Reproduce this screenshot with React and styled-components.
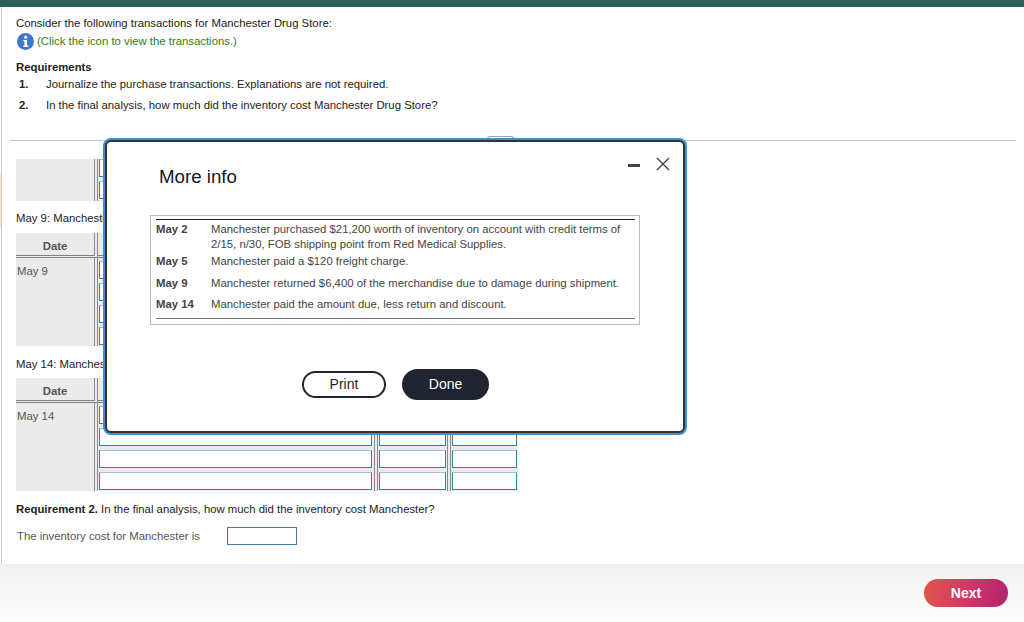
import React from "react"
import styled, { createGlobalStyle } from "styled-components"

const GlobalStyle = createGlobalStyle`
  html, body {
    margin: 0;
    padding: 0;
    background: #fff;
    font-family: "Liberation Sans", Arial, sans-serif;
    font-size: 11.35px;
    color: #222;
    overflow: hidden;
  }
`

const Page = styled.div`
  position: relative;
  width: 1024px;
  height: 622px;
  overflow: hidden;
`

const TopBar = styled.div`
  height: 7px;
  background: #2a5f5a;
`

const Main = styled.main`
  height: 557px;
  box-sizing: border-box;
  margin-left: 1px;
  border-left: 1px solid #ccccd4;
  padding: 8px 0 0 14px;
  line-height: 16px;
`

const Line = styled.div`
  color: #222;
  margin-top: ${(p) => p.$top || 0}px;
`

const InfoLine = styled.div`
  display: flex;
  align-items: center;
  gap: 3px;
  margin: 2px 0 0 1px;
  height: 16px;
  color: #2f7d1e;
`

const Bold = styled.b`
  font-weight: 700;
`

const ReqRow = styled.div`
  display: flex;
  margin-top: ${(p) => p.$top || 0}px;
  padding-left: 3px;
`

const ReqNum = styled.b`
  width: 27px;
`

const Rule = styled.hr`
  margin: 27px 8px 0 -6px;
  border: 0;
  border-top: 1px solid #c4c4cc;
`

const Table = styled.div`
  display: grid;
  grid-template-columns: 82px 280px 73px 67px;
  width: 502px;
  margin-top: ${(p) => p.$top}px;
  background: #ebebeb;
  color: #555;
`

const Head = styled.div`
  height: 22px;
  line-height: 26px;
  text-align: center;
  font-weight: 700;
  border-bottom: 3px double #808080;
  border-right: ${(p) => (p.$last ? "0" : "4px double #8a8a8a")};
`

const DateCell = styled.div`
  border-right: 4px double #8a8a8a;
  padding: ${(p) => p.$pad + 2}px 0 0 1px;
  line-height: 16px;
`

const InputCol = styled.div`
  display: flex;
  flex-direction: column;
  gap: 4px;
  padding: ${(p) => p.$pad}px ${(p) => p.$right}px ${(p) => p.$bottom}px 1px;
  border-right: ${(p) => (p.$last ? "0" : "4px double #8a8a8a")};
`

const Input = styled.div`
  height: 18px;
  box-sizing: border-box;
  border: 1px solid #3d7f9f;
  border-top-color: #9cc0d0;
  background: #fff;
`

const Caption = styled.div`
  margin-top: ${(p) => p.$top}px;
  height: 16px;
  white-space: nowrap;
`

const AnswerRow = styled.div`
  display: flex;
  align-items: center;
  margin: 10px 0 0 1px;
  height: 18px;
  color: #555;
`

const AnswerInput = styled(Input)`
  width: 70px;
  margin-left: 27px;
  border-top-color: #3d7f9f;
`

const Footer = styled.footer`
  height: 58px;
  box-sizing: border-box;
  display: flex;
  justify-content: flex-end;
  padding: 15px 16px 0 0;
  background: linear-gradient(#f0f0f0, #ffffff);
`

const NextButton = styled.button`
  width: 84px;
  height: 28px;
  border: 0;
  border-radius: 14px;
  background: linear-gradient(100deg, #e0574a 0%, #d23566 55%, #b0246f 100%);
  color: #fff;
  font: 700 14px "Liberation Sans", Arial, sans-serif;
  padding: 0;
`

const EdgeMark = styled.div`
  position: absolute;
  left: 0;
  top: 173px;
  width: 1px;
  height: 55px;
  background: #f6e7c0;
`

const Handle = styled.div`
  position: absolute;
  left: 487px;
  top: 136px;
  width: 27px;
  height: 4px;
  box-sizing: border-box;
  border: 1px solid #9aa4ae;
  border-bottom: 0;
  border-radius: 3px 3px 0 0;
`

const Modal = styled.section`
  position: absolute;
  left: 105px;
  top: 140px;
  width: 580px;
  height: 293px;
  box-sizing: border-box;
  border: 2px solid #333;
  border-radius: 6px;
  box-shadow: 0 0 0 2px #3f8fd0;
  background: #fff;
  padding: 0 43px;
  color: #444;
`

const ModalHeader = styled.div`
  display: flex;
  align-items: center;
  height: 69px;
  margin-bottom: 4px;
  padding-left: 9px;
  color: #101828;
  font-size: 18.7px;
`

const WindowControls = styled.div`
  position: absolute;
  top: 15px;
  right: 13px;
  display: flex;
  align-items: flex-start;
  gap: 16px;
`

const MinimizeMark = styled.div`
  margin-top: 6px;
`

const InfoBox = styled.div`
  border: 1px solid #bbb;
  padding: 3px 4px 5px 5px;
  height: 110px;
  box-sizing: border-box;
`

const InfoInner = styled.div`
  border-top: 1px solid #222;
  border-bottom: 1px solid #777;
  height: 100px;
  box-sizing: border-box;
  padding-top: 2px;
`

const InfoRow = styled.div`
  display: flex;
  line-height: 15px;
  min-height: ${(p) => p.$h}px;
`

const InfoDate = styled.b`
  width: 55px;
  flex: none;
`

const InfoText = styled.div`
  line-height: 15px;
  width: 420px;
`

const Buttons = styled.div`
  display: flex;
  align-items: center;
  gap: 16px;
  margin: 44px 0 0 152px;
`

const PillButton = styled.button`
  height: ${(p) => (p.$solid ? 31 : 27)}px;
  width: ${(p) => (p.$solid ? 87 : 84)}px;
  box-sizing: border-box;
  border-radius: 16px;
  border: 2px solid #1f2430;
  background: ${(p) => (p.$solid ? "#1f2430" : "#fff")};
  color: ${(p) => (p.$solid ? "#fff" : "#1f2430")};
  font: 14px "Liberation Sans", Arial, sans-serif;
  padding: 0 0 2px;
`

const InfoIcon = () => (
  <svg width="17" height="17" viewBox="0 0 17 17">
    <circle cx="8.5" cy="8.5" r="8.5" fill="#3b78d0" />
    <circle cx="8.7" cy="4.2" r="1.6" fill="#fff" />
    <path d="M6.4 7h3.7v5.4h1.2v1.5H6.3v-1.5h1.2V8.5H6.4z" fill="#fff" />
  </svg>
)

const MinimizeIcon = () => (
  <svg width="12" height="4" viewBox="0 0 12 4" display="block">
    <rect width="12" height="3" y="1" fill="#444" />
  </svg>
)

const CloseIcon = () => (
  <svg width="14" height="14" viewBox="0 0 14 14" display="block">
    <path d="M1 1l12 12M13 1L1 13" stroke="#3a4252" strokeWidth="1.4" fill="none" />
  </svg>
)

const Journal = ({ top, date, rows, pad = 3, bottom = 1, header = true }) => {
  const inputs = Array.from({ length: rows }, (_, i) => <Input key={i} />)
  return (
    <Table $top={top}>
      {header && (
        <>
          <Head>Date</Head>
          <Head />
          <Head />
          <Head $last />
        </>
      )}
      <DateCell $pad={pad}>{date}</DateCell>
      <InputCol $pad={pad} $bottom={bottom} $right={2}>
        {inputs}
      </InputCol>
      <InputCol $pad={pad} $bottom={bottom} $right={1}>
        {inputs}
      </InputCol>
      <InputCol $pad={pad} $bottom={bottom} $right={1} $last>
        {inputs}
      </InputCol>
    </Table>
  )
}

const transactions = [
  {
    date: "May 2",
    h: 32,
    text: "Manchester purchased $21,200 worth of inventory on account with credit terms of 2/15, n/30, FOB shipping point from Red Medical Supplies.",
  },
  { date: "May 5", h: 22, text: "Manchester paid a $120 freight charge." },
  { date: "May 9", h: 21, text: "Manchester returned $6,400 of the merchandise due to damage during shipment." },
  { date: "May 14", h: 20, text: "Manchester paid the amount due, less return and discount." },
]

const App = () => {
  return (
    <Page>
      <GlobalStyle />
      <TopBar />
      <Main>
        <Line>Consider the following transactions for Manchester Drug Store:</Line>
        <InfoLine>
          <InfoIcon />
          (Click the icon to view the transactions.)
        </InfoLine>
        <Line $top={10}>
          <Bold>Requirements</Bold>
        </Line>
        <ReqRow $top={1}>
          <ReqNum>1.</ReqNum>
          Journalize the purchase transactions. Explanations are not required.
        </ReqRow>
        <ReqRow $top={5}>
          <ReqNum>2.</ReqNum>
          In the final analysis, how much did the inventory cost Manchester Drug Store?
        </ReqRow>
        <Rule />
        <Journal top={18} rows={2} pad={0} bottom={2} header={false} />
        <Caption $top={9}>May 9: Manchester returned $6,400 of the merchandise.</Caption>
        <Journal top={7} date="May 9" rows={4} />
        <Caption $top={10}>May 14: Manchester paid the amount due.</Caption>
        <Journal top={6} date="May 14" rows={4} />
        <Line $top={10}>
          <Bold>Requirement 2.</Bold> In the final analysis, how much did the inventory cost Manchester?
        </Line>
        <AnswerRow>
          The inventory cost for Manchester is
          <AnswerInput />
        </AnswerRow>
      </Main>
      <Footer>
        <NextButton>Next</NextButton>
      </Footer>
      <EdgeMark />
      <Handle />
      <Modal>
        <ModalHeader>More info</ModalHeader>
        <WindowControls>
          <MinimizeMark>
            <MinimizeIcon />
          </MinimizeMark>
          <CloseIcon />
        </WindowControls>
        <InfoBox>
          <InfoInner>
            {transactions.map((t) => (
              <InfoRow key={t.date} $h={t.h}>
                <InfoDate>{t.date}</InfoDate>
                <InfoText>{t.text}</InfoText>
              </InfoRow>
            ))}
          </InfoInner>
        </InfoBox>
        <Buttons>
          <PillButton>Print</PillButton>
          <PillButton $solid>Done</PillButton>
        </Buttons>
      </Modal>
    </Page>
  )
}

export default App
